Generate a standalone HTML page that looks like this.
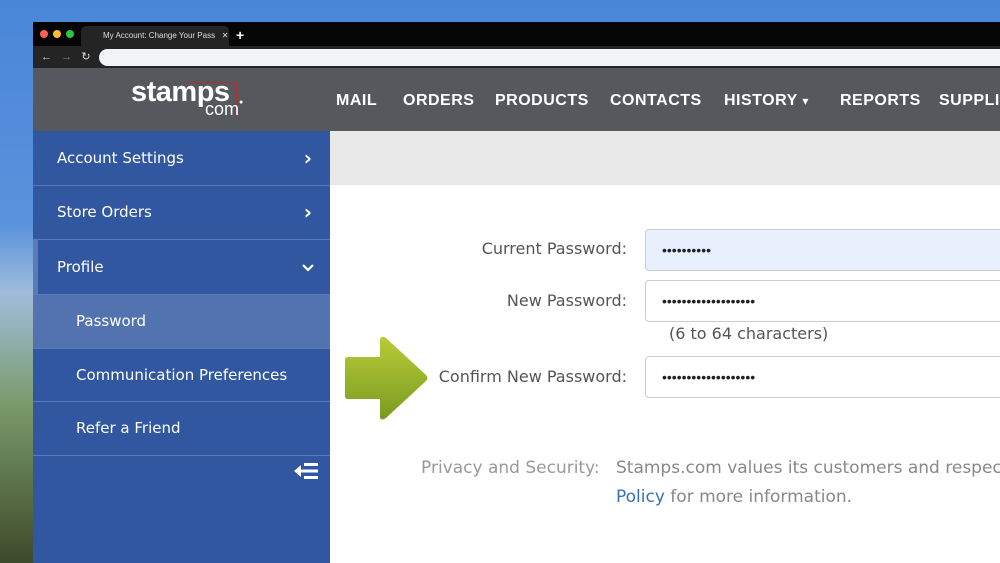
<!DOCTYPE html>
<html><head><style>
*{margin:0;padding:0;box-sizing:border-box}
body{width:1000px;height:563px;overflow:hidden;position:relative;font-family:"Liberation Sans","DejaVu Sans",sans-serif;background:linear-gradient(180deg,#4a86d8 0%,#5a92dc 40%,#9fbddc 52%,#7a9a6a 72%,#3d4a2a 100%)}
.abs{position:absolute}
.tabbar{left:33px;top:22px;width:967px;height:24px;background:#050505}
.dot{width:8px;height:8px;border-radius:50%;top:30px}
.tab{left:81px;top:26px;width:148px;height:20px;background:#242424;border-radius:5px 5px 0 0;color:#ddd;font-size:8px;line-height:20px;padding-left:22px;white-space:nowrap;overflow:hidden}
.tool{left:33px;top:46px;width:967px;height:22px;background:#242424}
.url{left:99px;top:49px;width:901px;height:17px;background:#f1f3f4;border-radius:9px 0 0 9px}
.hdr{left:33px;top:68px;width:967px;height:63px;background:#55595e}
.nav{top:92px;color:#fff;font-weight:bold;font-size:16px;letter-spacing:.5px}
.side{left:33px;top:131px;width:297px;height:432px;background:#3157a0}
.item{position:absolute;left:0;width:297px;color:#fff;border-bottom:1px solid #5a7bb8;font-family:"DejaVu Sans",sans-serif;font-size:15px}
.chev{position:absolute;right:18px;font-size:20px;font-weight:bold}
.main{left:330px;top:131px;width:670px;height:432px;background:#fff}
.lbl{color:#555;font-size:16px;text-align:right;width:300px;left:327px;font-family:"DejaVu Sans",sans-serif}
.inp{left:645px;width:360px;height:42px;border:1px solid #ccc;border-radius:4px;background:#fff;font-size:14px;letter-spacing:0px;padding-left:16px;line-height:40px;color:#222}
</style></head><body>
<div class="abs tabbar"></div>
<div class="abs dot" style="left:40px;background:#fe5f57"></div>
<div class="abs dot" style="left:53px;background:#febc2e"></div>
<div class="abs dot" style="left:66px;background:#28c840"></div>
<div class="abs tab">My Account: Change Your Pass&nbsp;&nbsp;&nbsp;✕</div>
<div class="abs" style="left:236px;top:27px;color:#fff;font-size:14px;font-weight:bold">+</div>
<div class="abs tool"></div>
<div class="abs" style="left:41px;top:50px;color:#ddd;font-size:11px">←&nbsp;&nbsp;&nbsp;<span style="color:#888">→</span>&nbsp;&nbsp;&nbsp;↻</div>
<div class="abs url"></div>
<div class="abs hdr"></div>
<div class="abs" style="left:186px;top:82px;width:51px;height:34px;border-top:1px solid #b03030;border-right:1px solid #b03030"></div>
<div class="abs" style="left:131px;top:76px;color:#fff;font-weight:bold;font-size:29px;letter-spacing:-.5px">stamps</div>
<div class="abs" style="left:205px;top:99px;color:#fff;font-size:18px">com<span style="font-size:7px;vertical-align:top">●</span></div>
<div class="abs nav" style="left:336px">MAIL</div>
<div class="abs nav" style="left:403px">ORDERS</div>
<div class="abs nav" style="left:495px">PRODUCTS</div>
<div class="abs nav" style="left:610px">CONTACTS</div>
<div class="abs nav" style="left:724px">HISTORY <span style="font-size:12px">▾</span></div>
<div class="abs nav" style="left:840px">REPORTS</div>
<div class="abs nav" style="left:939px">SUPPLIES</div>
<div class="abs side">
<div class="item" style="top:0;height:55px;line-height:54px;padding-left:24px">Account Settings<span class="chev">›</span></div>
<div class="item" style="top:55px;height:54px;line-height:53px;padding-left:24px">Store Orders<span class="chev">›</span></div>
<div class="item" style="top:109px;height:55px;line-height:54px;border-left:5px solid #5a7bb8;padding-left:19px">Profile<svg style="position:absolute;right:16px;top:24px" width="12" height="8" viewBox="0 0 12 8"><path d="M1 1 L6 6 L11 1" stroke="#fff" stroke-width="2.2" fill="none"/></svg></div>
<div class="item" style="top:164px;height:54px;line-height:53px;padding-left:43px;background:#5273b0">Password</div>
<div class="item" style="top:218px;height:53px;line-height:52px;padding-left:43px">Communication Preferences</div>
<div class="item" style="top:271px;height:54px;line-height:53px;padding-left:43px">Refer a Friend</div>
<svg style="position:absolute;left:261px;top:331px" width="26" height="18" viewBox="0 0 26 18"><path d="M0 9 L7 3 V15 Z" fill="#fff"/><rect x="7" y="7.5" width="6" height="3" fill="#fff"/><rect x="10" y="1" width="14" height="3" fill="#fff"/><rect x="12" y="7.5" width="12" height="3" fill="#fff"/><rect x="10" y="14" width="14" height="3" fill="#fff"/></svg>
</div>
<div class="abs main"></div>
<div class="abs" style="left:330px;top:131px;width:670px;height:54px;background:#e8e8e8"></div>
<div class="abs lbl" style="top:239px">Current Password:</div>
<div class="abs lbl" style="top:291px">New Password:</div>
<div class="abs lbl" style="top:367px">Confirm New Password:</div>
<div class="abs inp" style="top:229px;background:#e8f0fe">••••••••••</div>
<div class="abs inp" style="top:280px">•••••••••••••••••••</div>
<div class="abs" style="left:669px;top:324px;color:#555;font-size:16px;font-family:'DejaVu Sans',sans-serif">(6 to 64 characters)</div>
<div class="abs inp" style="top:356px">•••••••••••••••••••</div>
<svg class="abs" style="left:344px;top:335px" width="86" height="87" viewBox="0 0 86 87"><defs><linearGradient id="g" x1="0" y1="0" x2="0" y2="1"><stop offset="0" stop-color="#b8cc38"/><stop offset="1" stop-color="#7a9a20"/></linearGradient></defs><path d="M4 22 H36 V4 Q38 0 42 3 L82 40 Q85 43 82 46 L42 83 Q38 86 36 83 V64 H4 Q1 64 1 61 V25 Q1 22 4 22 Z" fill="url(#g)"/></svg>
<div class="abs" style="left:421px;top:458px;color:#999;font-size:17px;font-family:'DejaVu Sans',sans-serif">Privacy and Security:</div>
<div class="abs" style="left:616px;top:458px;color:#888;font-size:17px;white-space:nowrap;font-family:'DejaVu Sans',sans-serif">Stamps.com values its customers and respects</div>
<div class="abs" style="left:616px;top:487px;color:#888;font-size:17px;font-family:'DejaVu Sans',sans-serif"><span style="color:#3a6fb5">Policy</span> for more information.</div>
</body></html>
